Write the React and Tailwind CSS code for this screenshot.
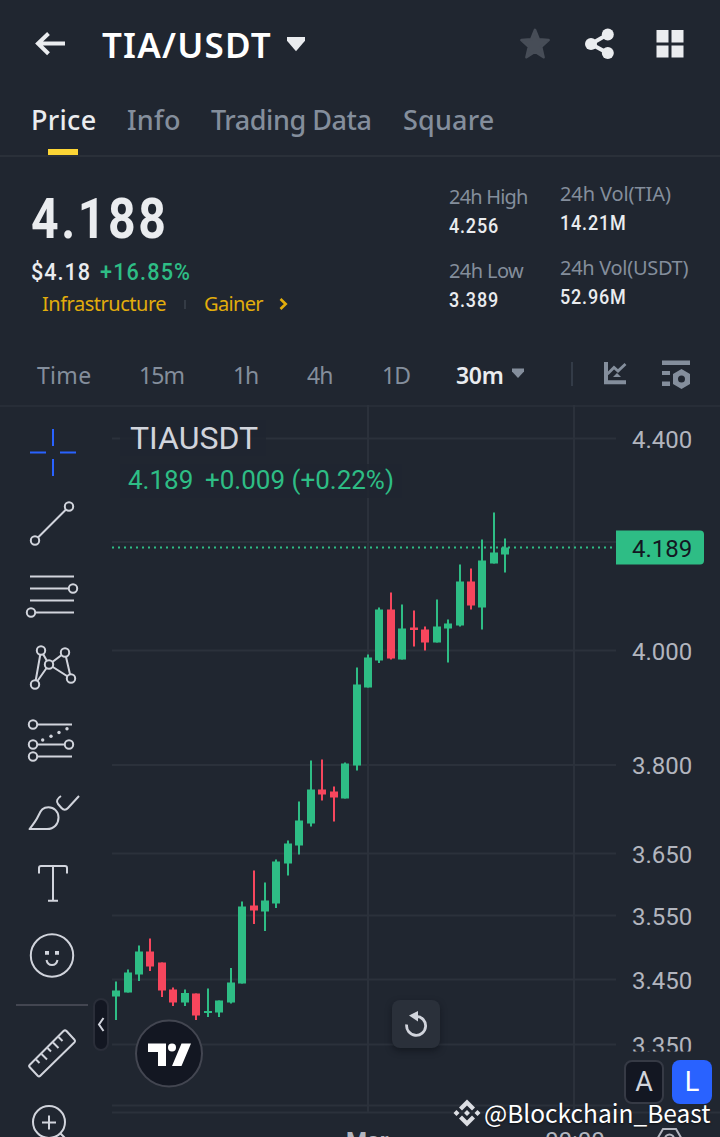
const LABEL = "font-['Noto_Sans','Liberation_Sans',sans-serif]";
const DIGIT = "font-['Roboto','Liberation_Sans',sans-serif]";

const UP = "#2ebd85";
const DOWN = "#f6465d";

// [x, high, bodyTop, bodyBottom, low, direction]
const CANDLES = [
  [116, 981, 990, 996, 1019.5, 1],
  [128, 969, 972, 992, 992, 1],
  [139, 945, 951, 974, 980.5, 1],
  [150, 938, 951, 966, 970.5, 0],
  [162, 962, 962, 990, 996.5, 0],
  [173, 987, 989, 1002, 1005.5, 0],
  [185, 989, 992.5, 1002, 1005.5, 1],
  [196, 993, 993, 1015, 1019.5, 0],
  [208, 988, 1010.5, 1012.5, 1016.5, 1],
  [219, 1000, 1000, 1012, 1016.5, 1],
  [231, 967.5, 982, 1002, 1003, 1],
  [242, 901, 906, 983, 983, 1],
  [254, 870, 905, 910, 923.5, 0],
  [265, 882, 900, 911, 930.5, 1],
  [276, 859, 861, 903, 907.5, 1],
  [288, 840, 843, 863, 875, 1],
  [299, 801, 820, 845, 854, 1],
  [311, 760, 789, 823, 826, 1],
  [322, 759, 789, 794, 800, 0],
  [334, 786, 791, 797, 821, 0],
  [345, 762, 763, 798, 798, 1],
  [357, 667, 684, 765, 770, 1],
  [368, 654, 657, 687, 687, 1],
  [379, 607, 609, 660, 662.5, 1],
  [391, 592, 609, 658, 659, 0],
  [402, 604, 628, 659, 659, 1],
  [414, 610, 627, 629.5, 646, 0],
  [425, 626, 629, 642, 650, 0],
  [437, 599, 626, 642, 642, 1],
  [448, 619, 623, 628, 662, 1],
  [460, 564, 581, 625, 626, 1],
  [471, 568, 581, 605, 609, 0],
  [482, 539, 560, 607, 629, 1],
  [494, 512, 552, 563, 563, 1],
  [505, 538, 547, 554, 572, 1],
];

const PRICE_LINES = [438.5, 542, 650.5, 765, 853.5, 915.5, 979.5, 1044.5, 1105.5];
const PRICE_LABELS = [
  ["4.400", 448],
  ["4.000", 660],
  ["3.800", 774],
  ["3.650", 863],
  ["3.550", 925],
  ["3.450", 989],
];

function Header() {
  return (
    <header className="flex h-[88px] items-center pl-[34px] pr-[36px]">
      <svg className="h-[26px] w-8" viewBox="0 0 32 26" fill="none" stroke="#eaecef" strokeWidth="4">
        <path d="M3 12.5H31M14.5 2.5L4 12.5L14.5 22.8" />
      </svg>
      <h1 className={`${LABEL} ml-[36px] pt-[2px] text-[35px] font-semibold leading-[88px] tracking-[1.2px] text-white`}>TIA/USDT</h1>
      <svg className="ml-[15px] h-[15px] w-[18px]" viewBox="0 0 18 15" fill="#eaecef">
        <path d="M0 0H18V3.8L9 14.3L0 3.8Z" />
      </svg>
      <div className="ml-auto flex items-center">
        <svg className="h-8 w-[30px]" viewBox="0 0 30 32" fill="#474d57" stroke="#474d57" strokeWidth="2.5" strokeLinejoin="round">
          <path d="M15 1.8L18.8 11.3L28.6 12.1L21.2 18.8L23.6 29.3L15 23.6L6.4 29.3L8.8 18.8L1.4 12.1L11.2 11.3Z" />
        </svg>
        <svg className="ml-[35px] h-8 w-[29px]" viewBox="0 0 29 32" fill="#eaecef" stroke="#eaecef">
          <path d="M6 16L22.5 6.5M6 16L22.5 25" strokeWidth="4" />
          <g stroke="none">
            <circle cx="6" cy="16" r="6" />
            <circle cx="22.8" cy="6.5" r="6" />
            <circle cx="22.8" cy="25" r="6" />
          </g>
        </svg>
        <svg className="ml-[42px] h-[28px] w-[28px]" viewBox="0 0 28 28" fill="#eaecef">
          <path d="M0.500 0H12.500V12.500H0.500ZM15.500 0H27.500V12.500H15.500ZM0.500 15.500H12.500V27.500H0.500ZM15.500 15.500H27.500V27.500H15.500Z" />
        </svg>
      </div>
    </header>
  );
}

function Tabs() {
  return (
    <nav className={`${LABEL} flex h-[69px] border-b-2 border-[#2a3039] pl-[31px] text-[27px] font-medium leading-[64px] text-[#848e9c]`}>
      <div className="flex w-[96px] flex-col">
        <span className="h-[61px] tracking-[0.3px] text-[#eaecef]">Price</span>
        <span className="ml-[17px] h-[7px] w-[30px] bg-[#fcd535]" />
      </div>
      <span className="w-[84px] tracking-[0.3px]">Info</span>
      <span className="w-[192px] tracking-[-0.45px]">Trading Data</span>
      <span className="tracking-[0.2px]">Square</span>
    </nav>
  );
}

function Stat({ label, value, spacing }) {
  return (
    <div className="h-[74px]">
      <div className={`${LABEL} ${spacing} whitespace-nowrap text-[20px] leading-[28px] text-[#848e9c]`}>{label}</div>
      <div className={`${DIGIT} origin-left scale-x-90 whitespace-nowrap text-[20px] font-medium leading-[30px] tracking-[0.9px] text-[#eaecef]`}>{value}</div>
    </div>
  );
}

function Summary() {
  return (
    <section className="flex h-[188px]">
      <div className="w-[449px] pl-[31px] pt-[28px]">
        <div className={`${DIGIT} origin-left scale-x-[0.86] text-[56px] font-bold leading-[68px] tracking-[3px] text-[#eaecef]`}>4.188</div>
        <div className={`${DIGIT} flex text-[24px] font-medium leading-[39px]`}>
          <span className="w-[69px] origin-left scale-x-90 tracking-[1.1px] text-[#eaecef]">$4.18</span>
          <span className="origin-left scale-x-90 tracking-[1.3px] text-[#2ebd85]">+16.85%</span>
        </div>
        <div className={`${LABEL} flex items-center pl-[11px] text-[20px] leading-[24px] text-[#e2ad0c]`}>
          <span className="w-[142px] tracking-[-0.48px]">Infrastructure</span>
          <span className="h-[9px] w-[2px] bg-[#343b45]" />
          <span className="ml-[18px] w-[75px] tracking-[-0.65px]">Gainer</span>
          <svg className="h-3 w-[9px]" viewBox="0 0 9 12" fill="none" stroke="#e2ad0c" strokeWidth="2.6">
            <path d="M1.5 1L6.7 6L1.5 11" />
          </svg>
        </div>
      </div>
      <div className="w-[111px] pt-[26px]">
        <Stat label="24h High" value="4.256" spacing="tracking-[-0.8px]" />
        <Stat label="24h Low" value="3.389" spacing="tracking-[-0.6px]" />
      </div>
      <div className="pt-[23px]">
        <Stat label="24h Vol(TIA)" value="14.21M" spacing="tracking-[-0.1px]" />
        <Stat label="24h Vol(USDT)" value="52.96M" spacing="tracking-[-0.3px]" />
      </div>
    </section>
  );
}

function Intervals() {
  return (
    <div className={`${LABEL} flex h-[60px] items-center pl-[37px] text-[23px] leading-[60px] text-[#848e9c]`}>
      <span className="w-[102px] tracking-[0.3px]">Time</span>
      <span className="w-[94px] tracking-[-0.9px]">15m</span>
      <span className="w-[74px] tracking-[-1.200px]">1h</span>
      <span className="w-[75px] tracking-[-1px]">4h</span>
      <span className="w-[74px] tracking-[-1px]">1D</span>
      <span className="w-[56px] font-semibold tracking-[-0.3px] text-[#eaecef]">30m</span>
      <svg className="mt-[-3px] h-[11px] w-3" viewBox="0 0 12 11" fill="#848e9c">
        <path d="M0 0.5H12V3.5L6 10L0 3.5Z" />
      </svg>
      <span className="ml-[47px] mt-[-3px] h-6 w-[2px] bg-[#333b47]" />
      <svg className="ml-[31px] mt-[-3px] h-[23px] w-[23px]" viewBox="0 0 23 23" fill="none" stroke="#848e9c">
        <path d="M2 0V20.2H22" strokeWidth="4" />
        <path d="M3.5 12L10 5.5L14 9L21.5 2" strokeWidth="2.8" />
        <path d="M9 15L13 11L17 15Z" fill="#848e9c" stroke="none" />
      </svg>
      <svg className="ml-[35px] h-[30px] w-7" viewBox="0 0 28 30" fill="#848e9c">
        <path d="M0 0.500H28V5H0ZM0 11H8V15H0ZM0 21.500H8V26H0Z" />
        <path fillRule="evenodd" d="M19.500 9L28 13.900V23.900L19.500 28.900L11 23.900V13.900ZM19.500 15.400A3.500 3.500 0 1 0 19.500 22.400A3.500 3.500 0 1 0 19.500 15.400Z" />
      </svg>
    </div>
  );
}

function Tool({ children }) {
  return (
    <svg className="block h-[72px] w-[104px] shrink-0" viewBox="0 0 104 72" fill="none" stroke="#d1d4dc" strokeWidth="2">
      {children}
    </svg>
  );
}

function Toolbar() {
  return (
    <aside className="flex h-[732px] w-[92px] shrink-0 flex-col overflow-hidden pt-[12px]">
      <Tool>
        <path d="M30 35.5H46M60 35.5H76M53 12V29M53 42V59" stroke="#2962ff" />
      </Tool>
      <Tool>
        <path d="M38 48.5L66 20.5" />
        <circle cx="69" cy="17.5" r="4.2" />
        <circle cx="35" cy="51.5" r="4.2" />
      </Tool>
      <Tool>
        <path d="M30 15.5H74M30 27.5H69M30 39.5H74M35 51.5H74" />
        <circle cx="73" cy="27.5" r="4.2" />
        <circle cx="31" cy="51.5" r="4.2" />
      </Tool>
      <Tool>
        <path d="M35 51.5L41 17.5L49 31.5L65 19.5L71 45.5L49 31.5Z" />
        <g fill="#202630">
          <circle cx="41" cy="17.5" r="4.2" />
          <circle cx="65" cy="19.5" r="4.2" />
          <circle cx="49" cy="31.5" r="4.2" />
          <circle cx="35" cy="51.5" r="4.2" />
          <circle cx="71" cy="45.5" r="4.2" />
        </g>
      </Tool>
      <Tool>
        <path d="M37 19.5H72M37 39.5H65M37 51.5H72" />
        <circle cx="33" cy="19.5" r="4.2" />
        <circle cx="33" cy="39.5" r="4.2" />
        <circle cx="69" cy="39.5" r="4.2" />
        <circle cx="33" cy="51.5" r="4.2" />
        <g fill="#d1d4dc" stroke="none">
          <circle cx="42.7" cy="35" r="1.7" />
          <circle cx="51" cy="31.3" r="1.7" />
          <circle cx="59" cy="27.5" r="1.7" />
          <circle cx="67" cy="23.7" r="1.7" />
        </g>
      </Tool>
      <Tool>
        <path d="M29.500 52H47C54 52 58.5 47 58.5 40.5C58.5 34.5 54 30.3 48.5 30.3C43 30.3 41 33 38.5 38.5C36 44 33.5 47 29.500 52Z" strokeLinejoin="round" />
        <path d="M61 19C57 21.5 56 24.5 58 27L61.5 31C63.5 33.2 66 33.2 68 31L79 19" />
      </Tool>
      <Tool>
        <path d="M39 24.5V19C39 17.7 39.7 17 41 17H65C66.300 17 67 17.7 67 19V24.5M53 17V52M48 51.700H58" />
      </Tool>
      <Tool>
        <circle cx="52" cy="34.500" r="21.200" />
        <path d="M46.500 39C47.200 42.500 49.500 44 52 44C54.500 44 56.800 42.500 57.500 39" />
        <path d="M45 30H49V33.700H45ZM55 30H59V33.700H55Z" fill="#d1d4dc" stroke="none" />
      </Tool>
      <div className="ml-4 mt-[11px] h-[2px] w-[72px] shrink-0 bg-[#434651]" />
      <svg className="mt-[12px] block h-[72px] w-[104px] shrink-0" viewBox="0 0 104 72" fill="none" stroke="#d1d4dc" strokeWidth="2" strokeLinejoin="round">
        <path d="M63.500 13L29.800 46.700Q28.500 48 29.800 49.300L37.700 57.700Q39 59 40.300 57.700L74.500 24.300Q75.700 23 74.500 21.700L66.500 13Q65 11.700 63.500 13Z" />
        <path d="M36 41.500L39.500 45M41.500 36L47 41.500M47.500 30L51 33.500M53 24.500L58.500 30M58.500 19L62.500 23" />
      </svg>
      <svg className="mt-[11px] block h-12 w-[104px] shrink-0" viewBox="0 0 104 48" fill="none" stroke="#d1d4dc" strokeWidth="2">
        <circle cx="49" cy="21" r="16" />
        <path d="M42 21.500H56M49 14.500V28.500M60 32L68 40" />
      </svg>
    </aside>
  );
}

function Chart() {
  return (
    <svg className={`${DIGIT} block h-[732px] w-[628px] shrink-0`} viewBox="92 405 628 732">
      <g fill="#2b313b">
        {PRICE_LINES.map((y) => (
          <rect key={y} x="112" y={y - 1} width="504" height="2" />
        ))}
        <rect x="367" y="405" width="2" height="707" />
        <rect x="573" y="405" width="2" height="707" />
        <rect x="112" y="1111.500" width="608" height="2" />
      </g>
      <rect x="120" y="420" width="146" height="36" fill="#202630" opacity="0.85" />
      <rect x="120" y="464" width="282" height="34" fill="#202630" opacity="0.85" />
      {CANDLES.map(([x, high, top, bottom, low, up]) => (
        <g key={x} fill={up ? UP : DOWN}>
          <rect x={x - 1} y={high + 0.5} width="2" height={low - high} />
          <rect x={x - 4} y={top + 0.5} width="8" height={bottom - top} />
        </g>
      ))}
      <path d="M112 547.500H614" stroke={UP} strokeWidth="2" strokeDasharray="2 4" />
      <text x="130" y="448.500" fontSize="32" fill="#d1d4dc">TIAUSDT</text>
      <text x="128" y="488.500" fontSize="26" fill={UP}>4.189</text>
      <text x="205" y="488.500" fontSize="26" fill={UP}>+0.009 (+0.22%)</text>
      <g fontSize="24" fill="#b2b5be">
        {PRICE_LABELS.map(([t, y]) => (
          <text key={t} x="632" y={y}>{t}</text>
        ))}
        <svg x="620" y="1030" width="90" height="21.500" viewBox="620 1030 90 21.500">
          <text x="632" y="1053.500">3.350</text>
        </svg>
        <text x="346" y="1149" fontWeight="700">Mar</text>
        <text x="545" y="1149">00:00</text>
      </g>
      <path d="M616 530.500H700Q704 530.500 704 534.500V560.500Q704 564.500 700 564.500H616Z" fill={UP} />
      <text x="632" y="557" fontSize="24" fill="#131722">4.189</text>
      <path d="M663 1129H676L683 1141L676 1153H663L656 1141Z M665 1139A4.500 4.500 0 1 1 674 1139" fill="none" stroke="#b2b5be" strokeWidth="2" />
      <rect x="94" y="999" width="14" height="51" rx="7" fill="#131722" stroke="#2a2e39" strokeWidth="2" />
      <path d="M103.500 1018L99 1024.500L103.500 1031" fill="none" stroke="#d1d4dc" strokeWidth="2" />
      <circle cx="169" cy="1053.500" r="33" fill="#131722" stroke="#434651" strokeWidth="2" />
      <path d="M148 1043.500H166V1066H158V1052H148ZM181.500 1043.500H191L181.500 1066H172Z" fill="#fff" />
      <circle cx="172" cy="1047.500" r="4" fill="#fff" />
    </svg>
  );
}

function ResetButton() {
  return (
    <button className="absolute left-[392px] top-[1000px] flex h-12 w-12 items-center justify-center rounded-lg bg-[#2a303a] shadow-[0_3px_6px_rgba(10,13,20,0.5)]">
      <svg className="h-7 w-6" viewBox="0 0 24 28" fill="none">
        <path d="M2.700 14.500A9.500 9.500 0 1 0 12.500 6.300" stroke="#d1d4dc" strokeWidth="2.800" />
        <path d="M14 1V11.500L5 5.500Z" fill="#d1d4dc" />
      </svg>
    </button>
  );
}

function ScaleButtons() {
  return (
    <div className={`${DIGIT} absolute left-[624px] top-[1060px] flex gap-2 text-[27px] leading-[30px]`}>
      <button className="flex h-11 w-10 items-center justify-center rounded-[8px] border-2 border-[#363a45] bg-[#131722] text-[#d1d4dc]">A</button>
      <button className="flex h-11 w-10 items-center justify-center rounded-[8px] bg-[#2962ff] text-white">L</button>
    </div>
  );
}

function Watermark() {
  return (
    <div className="absolute left-[453px] top-[1098px] flex h-[30px] items-center gap-[3px] whitespace-nowrap font-['Noto_Sans_CJK_SC','Noto_Sans',sans-serif] text-[24.500px] leading-[28px] text-white [text-shadow:0_1px_2px_rgba(0,0,0,0.6)]">
      <svg className="h-7 w-7" viewBox="0 0 28 28" fill="#dcdee3">
        <path d="M14 0.500L22 8.500L19 11.500L14 6.500L9 11.500L6 8.500ZM14 27.500L22 19.500L19 16.500L14 21.500L9 16.500L6 19.500ZM14 11L17 14L14 17L11 14ZM3.500 11L6.500 14L3.500 17L0.500 14ZM24.500 11L27.500 14L24.500 17L21.500 14Z" />
      </svg>
      <span>@Blockchain_Beast</span>
    </div>
  );
}

export default function App() {
  return (
    <main className="relative h-[1137px] w-[720px] overflow-hidden bg-[#202630]">
      <Header />
      <Tabs />
      <Summary />
      <Intervals />
      <div className="flex h-[732px] shadow-[inset_0_2px_0_#272d37]">
        <Toolbar />
        <Chart />
      </div>
      <ResetButton />
      <ScaleButtons />
      <Watermark />
    </main>
  );
}
